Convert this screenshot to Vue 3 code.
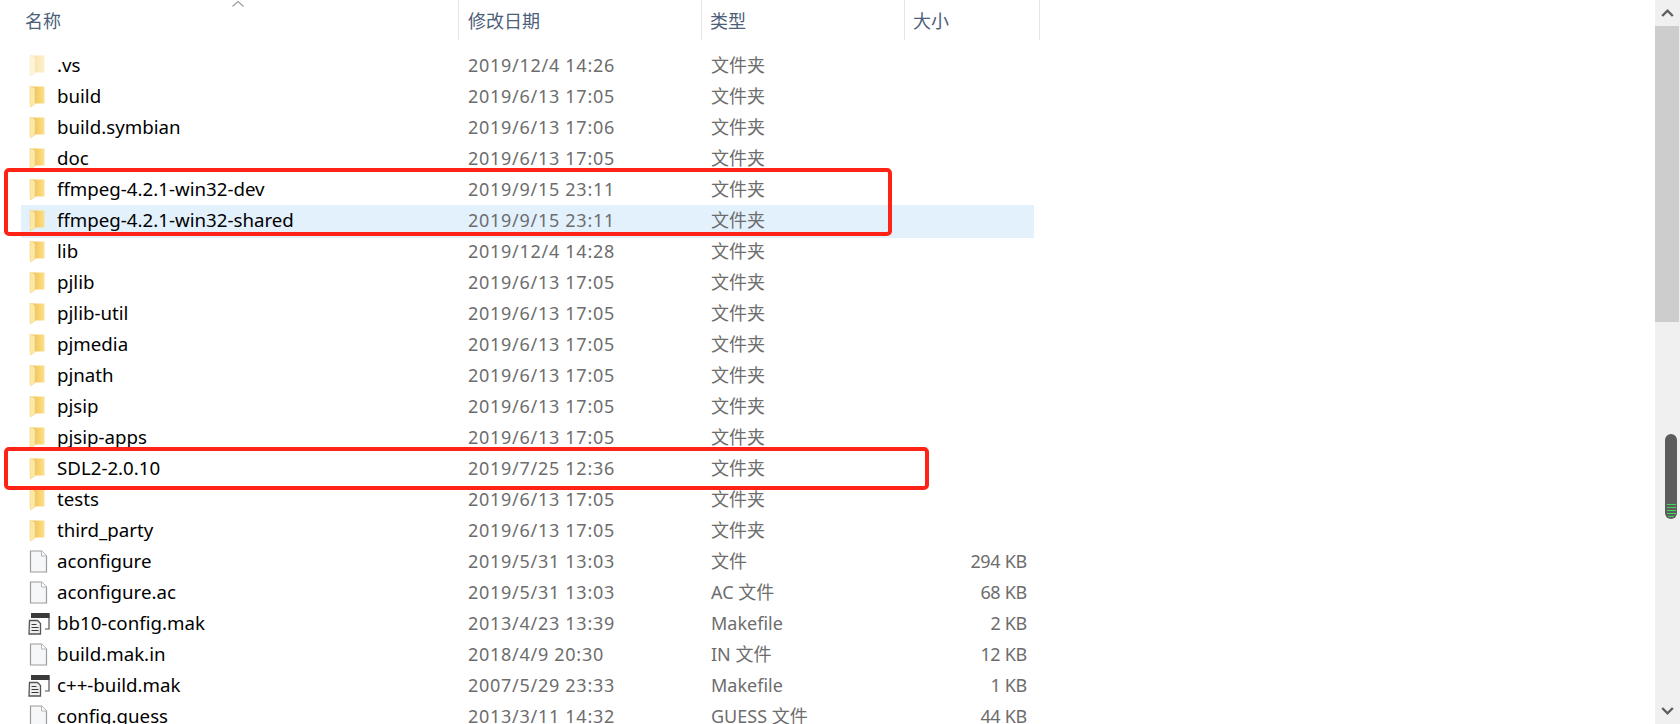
<script setup>
const F = '文件夹'
const rows = [
  ['.vs', '2019/12/4 14:26', F, '', 'folder faded'],
  ['build', '2019/6/13 17:05', F, '', 'folder'],
  ['build.symbian', '2019/6/13 17:06', F, '', 'folder'],
  ['doc', '2019/6/13 17:05', F, '', 'folder'],
  ['ffmpeg-4.2.1-win32-dev', '2019/9/15 23:11', F, '', 'folder'],
  ['ffmpeg-4.2.1-win32-shared', '2019/9/15 23:11', F, '', 'folder', true],
  ['lib', '2019/12/4 14:28', F, '', 'folder'],
  ['pjlib', '2019/6/13 17:05', F, '', 'folder'],
  ['pjlib-util', '2019/6/13 17:05', F, '', 'folder'],
  ['pjmedia', '2019/6/13 17:05', F, '', 'folder'],
  ['pjnath', '2019/6/13 17:05', F, '', 'folder'],
  ['pjsip', '2019/6/13 17:05', F, '', 'folder'],
  ['pjsip-apps', '2019/6/13 17:05', F, '', 'folder'],
  ['SDL2-2.0.10', '2019/7/25 12:36', F, '', 'folder'],
  ['tests', '2019/6/13 17:05', F, '', 'folder'],
  ['third_party', '2019/6/13 17:05', F, '', 'folder'],
  ['aconfigure', '2019/5/31 13:03', '文件', '294 KB', 'file'],
  ['aconfigure.ac', '2019/5/31 13:03', 'AC 文件', '68 KB', 'file'],
  ['bb10-config.mak', '2013/4/23 13:39', 'Makefile', '2 KB', 'make'],
  ['build.mak.in', '2018/4/9 20:30', 'IN 文件', '12 KB', 'file'],
  ['c++-build.mak', '2007/5/29 23:33', 'Makefile', '1 KB', 'make'],
  ['config.guess', '2013/3/11 14:32', 'GUESS 文件', '44 KB', 'file'],
].map(([name, date, type, size, icon, hot]) => ({ name, date, type, size, icon, hot }))
</script>

<template>
  <div class="page">
    <div class="list">
      <header class="head">
        <div class="hcell c-name">名称<svg class="sort" width="14" height="8" viewBox="0 0 14 8"><path d="M1.5 6.5 7 1.5l5.5 5" fill="none" stroke="#9a9a9a" stroke-width="1.1" /></svg></div>
        <div class="hcell c-date">修改日期</div>
        <div class="hcell c-type">类型</div>
        <div class="hcell c-size">大小</div>
      </header>
      <div class="body">
        <div v-for="r in rows" :key="r.name" class="row" :class="{ hot: r.hot }">
          <div class="cell c-name name">
            <span class="icon-box">
              <svg v-if="r.icon.startsWith('folder')" :class="{ faded: r.icon === 'folder faded' }" width="17" height="23" viewBox="0 0 17 23">
                <defs>
                  <linearGradient id="fg" x1="0" y1="0" x2="1" y2="0">
                    <stop offset="0.2" stop-color="#f2c65c" />
                    <stop offset="1" stop-color="#fde08c" />
                  </linearGradient>
                </defs>
                <path d="M3 1.500h12.500v17H3z" fill="url(#fg)" />
                <path d="M1 1.500h2.500L6 4v15l-4.500 3-.5-3.500z" fill="#fde9a6" stroke="#ecca72" stroke-width=".5" />
              </svg>
              <svg v-else-if="r.icon === 'file'" width="20" height="23" viewBox="0 0 20 23">
                <path d="M1.500 1h11l5 5v16h-16z" fill="#f6f7f8" stroke="#9c9c9c" stroke-width="1.200" />
                <path d="M12.500 1v5h5" fill="#fff" stroke="#b5b5b5" />
              </svg>
              <svg v-else class="make" width="23" height="23" viewBox="0 0 23 23">
                <path d="M4 6V2h17v15h-4" fill="#fff" stroke="#555" stroke-width="1.200" />
                <rect x="3" y="1" width="18.500" height="5" fill="#3a3a3a" />
                <path d="M1.500 8.500h8l3 3v10.500h-11.500z" fill="#efefef" stroke="#555" stroke-width="1.300" />
                <path d="M3.500 12.500h5M3.500 15.500h7M3.500 18.500h7" stroke="#3a3a3a" stroke-width="1.200" />
              </svg>
            </span>
            <span class="label">{{ r.name }}</span>
          </div>
          <div class="cell c-date meta date">{{ r.date }}</div>
          <div class="cell c-type meta">{{ r.type }}</div>
          <div class="cell c-size meta">{{ r.size }}</div>
        </div>
      </div>
      <div class="mark mark-ffmpeg"></div>
      <div class="mark mark-sdl"></div>
    </div>
    <aside class="scrollbar">
      <div class="arrow"><svg width="13" height="10" viewBox="0 0 13 10"><path d="M1.200 8 6.500 2.700 11.800 8" fill="none" stroke="#5f5f5f" stroke-width="2.400" /></svg></div>
      <div class="thumb"></div>
      <div class="grip">
        <i></i><i></i><i></i><i></i><i class="short"></i>
      </div>
      <div class="arrow bottom"><svg width="13" height="10" viewBox="0 0 13 10"><path d="M1.200 2 6.500 7.300 11.800 2" fill="none" stroke="#5f5f5f" stroke-width="2.400" /></svg></div>
    </aside>
  </div>
</template>

<style>
html, body { margin: 0; background: #fff; overflow: hidden; }
</style>

<style scoped>
.page {
  position: relative;
  display: flex;
  width: 1680px;
  height: 724px;
  overflow: hidden;
  background: #fff;
  font-family: "Noto Sans", "Noto Sans CJK SC", sans-serif;
  font-size: 18px;
}
.list { flex: 1; min-width: 0; position: relative; }
.head { display: flex; height: 40px; }
.hcell {
  box-sizing: border-box;
  height: 40px;
  padding: 2px 0 0 9px;
  line-height: 38px;
  color: #4c607a;
  border-right: 1px solid #e5e5e5;
  position: relative;
}
.c-name { width: 458px; flex: none; }
.c-date { width: 243px; flex: none; }
.c-type { width: 203px; flex: none; }
.c-size { width: 135px; flex: none; }
.head .c-name { width: 459px; padding-left: 25px; }
.head .c-type { padding-left: 8px; }
.head .c-size { padding-left: 8px; }
.sort { position: absolute; left: 231px; top: 0; }
.body { padding-top: 10px; }
.row { display: flex; height: 31px; align-items: center; position: relative; width: 1034px; }
.row.hot::before {
  content: "";
  position: absolute;
  left: 21px;
  right: 0;
  top: 0;
  height: 33px;
  background: #e3f1fd;
}
.cell { position: relative; white-space: nowrap; box-sizing: border-box; line-height: 31px; }
.name { display: flex; align-items: center; padding-left: 29px; color: #000; font-size: 18.7px; }
.label { line-height: 29px; margin-bottom: 2px; }
.icon-box { width: 28px; height: 23px; flex: none; display: flex; }
.make { margin-left: -1px; }
.faded { opacity: .45; }
.meta { color: #6d6d6d; padding-left: 10px; }
.date { letter-spacing: .72px; }
.row .c-size { text-align: right; padding: 0 12px 0 0; letter-spacing: -.3px; }
.mark { position: absolute; box-sizing: border-box; border: 4px solid #ff2317; border-radius: 5px; pointer-events: none; }
.mark-ffmpeg { left: 4px; top: 168px; width: 888px; height: 68px; }
.mark-sdl { left: 4px; top: 447px; width: 925px; height: 43px; }
.scrollbar { width: 25px; flex: none; height: 724px; background: #f0f0f0; position: relative; display: flex; flex-direction: column; }
.arrow { height: 26px; flex: none; display: flex; align-items: center; justify-content: center; }
.arrow.bottom { margin-top: auto; }
.thumb { height: 296px; background: #cdcdcd; flex: none; margin-right: 1px; }
.grip {
  position: absolute; left: 10px; top: 434px; width: 12px; height: 85px;
  box-sizing: border-box;
  background: #5c5c5c; border-radius: 6px;
  display: flex; flex-direction: column; align-items: center; justify-content: flex-end; gap: 2px; padding-bottom: 2px;
}
.grip i { display: block; width: 9px; height: 1px; background: #44d55e; }
.grip i.short { width: 6px; }
</style>
